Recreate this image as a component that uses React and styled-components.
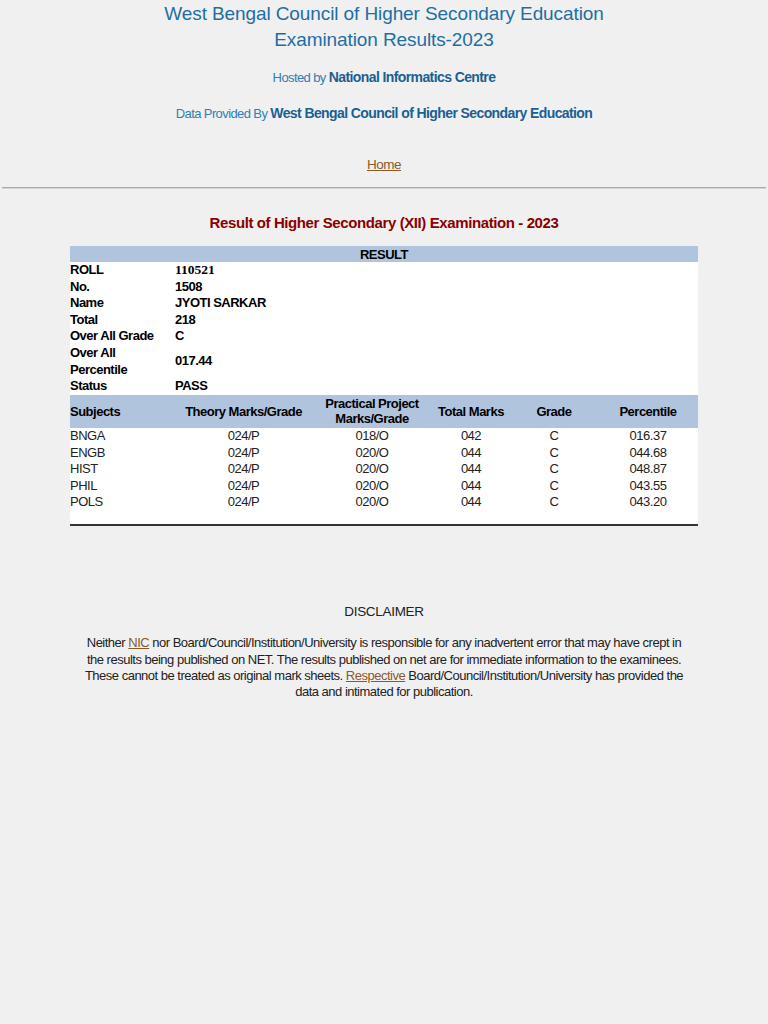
import React from 'react';
import styled, { createGlobalStyle } from 'styled-components';

const GlobalStyle = createGlobalStyle`
    body {
        margin: 0;
        background: #f0f0f0;
        font-family: "Liberation Sans", Arial, sans-serif;
    }
`;

const Page = styled.div`
    padding: 1px 2px 40px;
    text-align: center;
`;

const Title = styled.h1`
    margin: 0;
    font-weight: normal;
    font-size: 19px;
    letter-spacing: -0.1px;
    line-height: 26px;
    color: #1f6ea3;
`;

const Credit = styled.p`
    margin: ${p => p.top}px 0 0;
    font-size: 13px;
    line-height: 18px;
    letter-spacing: -0.6px;
    color: #2f7fb4;

    b {
        color: #1b5f93;
        font-size: 14px;
    }
`;

const NavLink = styled.a`
    display: inline-block;
    margin-top: 34px;
    font-size: 13.5px;
    letter-spacing: -0.5px;
    color: #8a5a2b;
    text-decoration: underline;
`;

const Rule = styled.hr`
    margin: 14px 0 0;
    border: none;
    border-top: 1px solid #a9a9a9;
    border-bottom: 1px solid #d6d6d6;
`;

const ResultHeading = styled.h2`
    margin: 24px 0 0;
    font-size: 15px;
    letter-spacing: -0.4px;
    line-height: 20px;
    font-weight: bold;
    color: #8b0000;
`;

const Table = styled.table`
    width: 628px;
    margin: 13px auto 0;
    table-layout: fixed;
    border-collapse: collapse;
    background: #fff;
    font-size: 13px;
    letter-spacing: -0.5px;
    color: #000;
    border-bottom: 2px solid #333;
`;

const Col = styled.col`
    width: ${p => p.w ? `${p.w}px` : 'auto'};
`;

const HeadCell = styled.th`
    background: #b0c4de;
    font-weight: bold;
    padding: 0;
    height: ${p => p.tall ? 33 : 16}px;
    line-height: 15px;
    text-align: ${p => p.left ? 'left' : 'center'};
`;

const Label = styled.td`
    font-weight: bold;
    text-align: left;
    padding: 0;
    height: 16.6px;
    line-height: 16.6px;
`;

const Value = styled.td`
    font-weight: bold;
    text-align: left;
    padding: 0;
    line-height: 16.6px;
    font-family: ${p => p.serif ? '"Liberation Serif", "Times New Roman", serif' : 'inherit'};
    letter-spacing: ${p => p.serif ? '0' : '-0.5px'};
    font-size: ${p => p.serif ? '13.5px' : '13px'};
`;

const Cell = styled.td`
    padding: 0;
    height: 16.4px;
    line-height: 15px;
    color: #222;
    text-align: ${p => p.left ? 'left' : 'center'};
`;

const Spacer = styled.td`
    height: 14px;
    padding: 0;
`;

const Disclaimer = styled.section`
    margin: 78px auto 0;
    width: 600px;
    font-size: 13px;
    letter-spacing: -0.5px;
    line-height: 16.4px;
    color: #222;
`;

const DisclaimerTitle = styled.div`
    font-size: 13.5px;
    letter-spacing: -0.3px;
    margin-bottom: 15px;
`;

const InlineLink = styled.a`
    color: #8a5a2b;
    text-decoration: underline;
`;

const info = [
    ['ROLL', '110521', true],
    ['No.', '1508'],
    ['Name', 'JYOTI SARKAR'],
    ['Total', '218'],
    ['Over All Grade', 'C'],
    ['Over All Percentile', '017.44'],
    ['Status', 'PASS'],
];

const subjects = [
    ['BNGA', '024/P', '018/O', '042', 'C', '016.37'],
    ['ENGB', '024/P', '020/O', '044', 'C', '044.68'],
    ['HIST', '024/P', '020/O', '044', 'C', '048.87'],
    ['PHIL', '024/P', '020/O', '044', 'C', '043.55'],
    ['POLS', '024/P', '020/O', '044', 'C', '043.20'],
];

const App = () => {
    return (
        <Page>
            <GlobalStyle />
            <Title>West Bengal Council of Higher Secondary Education<br />Examination Results-2023</Title>
            <Credit top={15}>Hosted by <b>National Informatics Centre</b></Credit>
            <Credit top={17}>Data Provided By <b>West Bengal Council of Higher Secondary Education</b></Credit>
            <NavLink href="#">Home</NavLink>
            <Rule />
            <ResultHeading>Result of Higher Secondary (XII) Examination - 2023</ResultHeading>
            <Table>
                <colgroup>
                    <Col w={105} />
                    <Col w={137} />
                    <Col w={120} />
                    <Col w={78} />
                    <Col w={88} />
                    <Col />
                </colgroup>
                <thead>
                    <tr><HeadCell colSpan={6}>RESULT</HeadCell></tr>
                </thead>
                <tbody>
                    {info.map(([label, value, serif]) => (
                        <tr key={label}>
                            <Label>{label}</Label>
                            <Value colSpan={5} serif={serif}>{value}</Value>
                        </tr>
                    ))}
                    <tr>
                        <HeadCell tall left>Subjects</HeadCell>
                        <HeadCell>Theory Marks/Grade</HeadCell>
                        <HeadCell>Practical Project<br />Marks/Grade</HeadCell>
                        <HeadCell>Total Marks</HeadCell>
                        <HeadCell>Grade</HeadCell>
                        <HeadCell>Percentile</HeadCell>
                    </tr>
                    {subjects.map(row => (
                        <tr key={row[0]}>
                            {row.map((v, i) => <Cell key={i} left={i === 0}>{v}</Cell>)}
                        </tr>
                    ))}
                    <tr><Spacer colSpan={6} /></tr>
                </tbody>
            </Table>
            <Disclaimer>
                <DisclaimerTitle>DISCLAIMER</DisclaimerTitle>
                Neither <InlineLink href="#">NIC</InlineLink> nor Board/Council/Institution/University is responsible for any inadvertent error that may have crept in the results being published on NET. The results published on net are for immediate information to the examinees. These cannot be treated as original mark sheets. <InlineLink href="#">Respective</InlineLink> Board/Council/Institution/University has provided the data and intimated for publication.
            </Disclaimer>
        </Page>
    );
};

export default App;
